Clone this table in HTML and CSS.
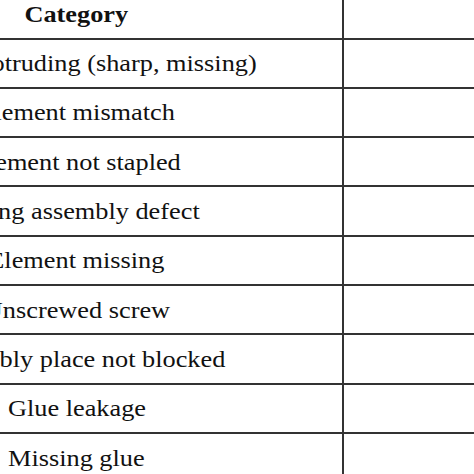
FILE: index.html
```html
<!DOCTYPE html>
<html lang="en">
<head>
<meta charset="utf-8">
<title>Defect categories</title>
<link rel="stylesheet" href="styles.css">
</head>
<body>
<div class="sheet">
  <div class="row head"><div class="cat"><span>Category</span></div><div class="val"></div></div>
  <div class="row"><div class="cat"><span>Staple protruding (sharp, missing)</span></div><div class="val"></div></div>
  <div class="row"><div class="cat"><span>Element mismatch</span></div><div class="val"></div></div>
  <div class="row"><div class="cat"><span>Element not stapled</span></div><div class="val"></div></div>
  <div class="row"><div class="cat"><span>Fitting assembly defect</span></div><div class="val"></div></div>
  <div class="row"><div class="cat"><span>Element missing</span></div><div class="val"></div></div>
  <div class="row"><div class="cat"><span>Unscrewed screw</span></div><div class="val"></div></div>
  <div class="row"><div class="cat"><span>Assembly place not blocked</span></div><div class="val"></div></div>
  <div class="row"><div class="cat"><span>Glue leakage</span></div><div class="val"></div></div>
  <div class="row"><div class="cat"><span>Missing glue</span></div><div class="val"></div></div>
  <div class="row"><div class="cat"><span>Other</span></div><div class="val"></div></div>
</div>
</body>
</html>
```

FILE: styles.css
```css
html, body {
  margin: 0;
  padding: 0;
  background: #ffffff;
  overflow: hidden;
}

.sheet {
  margin-top: -9.8px;
  margin-left: -189px;
  width: 900px;
}

.row {
  display: flex;
  box-sizing: border-box;
  height: 49.3px;
  border-bottom: 2px solid #333333;
}

.cat {
  width: 531px;
  flex: none;
  border-right: 2px solid #333333;
  display: flex;
  align-items: center;
  justify-content: center;
  padding-top: 1px;
  box-sizing: border-box;
  width: 533px;
  font-family: "Liberation Serif", "Times New Roman", serif;
  font-size: 24px;
  color: #111111;
}

.cat span {
  display: inline-block;
  white-space: nowrap;
  transform: scaleX(1.096);
}

.head .cat {
  font-weight: bold;
}

.val {
  flex: 1;
}
```
